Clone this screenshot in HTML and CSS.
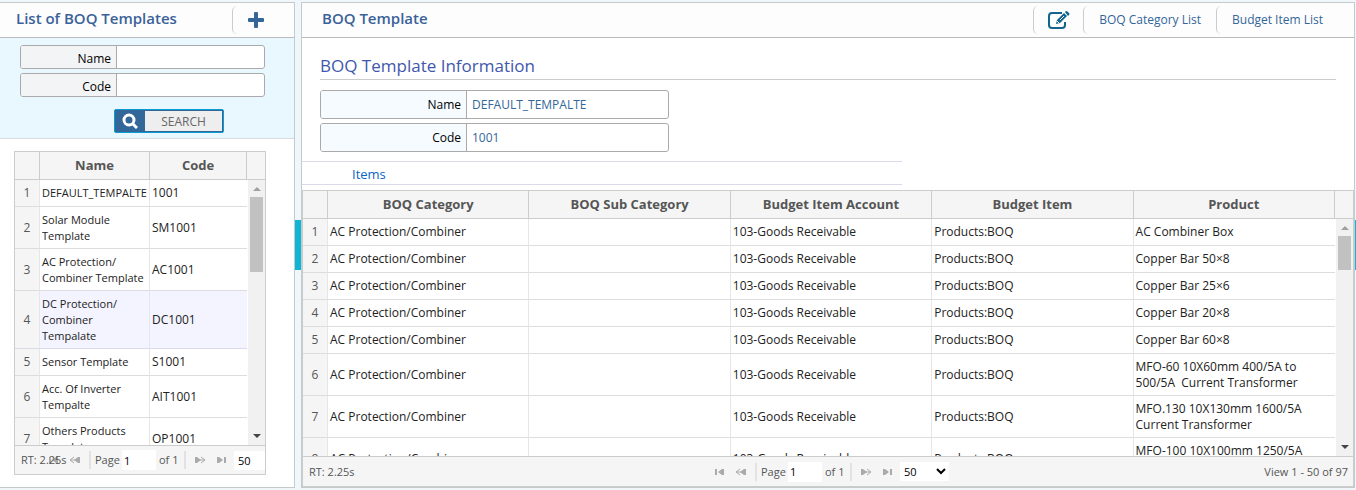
FILE: index.html
```html
<!DOCTYPE html>
<html lang="en">
<head>
    <meta charset="UTF-8">
    <meta name="viewport" content="width=device-width, initial-scale=1.0">
    <title>BOQ Template</title>
    <link rel="stylesheet" href="styles.css">
</head>
<body>
    <svg class="symbols" aria-hidden="true">
        <symbol id="icon-first" viewBox="0 0 11 8"><path d="M1 1h2v6H1zM10 1v6H8L4 4l4-3z"/></symbol>
        <symbol id="icon-prev" viewBox="0 0 11 8"><path d="M11 1v6H9L5 4l4-3z"/><path class="stroke" d="M5 1L1 4l4 3M1 4h5"/></symbol>
        <symbol id="icon-next" viewBox="0 0 11 8"><path d="M0 1v6h2l4-3-4-3z"/><path class="stroke" d="M6 1l4 3-4 3M10 4H5"/></symbol>
        <symbol id="icon-last" viewBox="0 0 11 8"><path d="M8 1h2v6H8zM1 1v6h2l4-3-4-3z"/></symbol>
    </svg>

    <div class="layout">
        <aside class="panel sidebar">
            <header class="panel-header">
                <h2>List of BOQ Templates</h2>
                <button type="button" class="tool add-btn" aria-label="Add">
                    <svg width="16" height="16" viewBox="0 0 16 16"><path d="M6 1q0-1 1-1h2q1 0 1 1v5h5q1 0 1 1v2q0 1-1 1h-5v5q0 1-1 1H7q-1 0-1-1v-5H1q-1 0-1-1V7q0-1 1-1h5z"/></svg>
                </button>
            </header>
            <form class="filter">
                <div class="field">
                    <label for="searchName">Name</label>
                    <input type="text" id="searchName" name="searchName">
                </div>
                <div class="field">
                    <label for="searchCode">Code</label>
                    <input type="text" id="searchCode" name="searchCode">
                </div>
                <button type="button" class="search-btn">
                    <span class="search-icon">
                        <svg width="16" height="16" viewBox="0 0 16 16"><circle cx="7" cy="7" r="5"/><path d="M11 11l4 4"/></svg>
                    </span>
                    <span class="search-text">SEARCH</span>
                </button>
            </form>
            <div class="grid list-grid">
                <div class="grid-body">
                    <div class="table-wrap">
                        <table>
                            <thead>
                                <tr><th class="rn"></th><th class="col-name">Name</th><th>Code</th></tr>
                            </thead>
                            <tbody>
                                <tr><td class="rn">1</td><td class="name">DEFAULT_TEMPALTE</td><td>1001</td></tr>
                                <tr class="multi"><td class="rn">2</td><td class="name">Solar Module<br>Template</td><td>SM1001</td></tr>
                                <tr class="multi"><td class="rn">3</td><td class="name">AC Protection/<br>Combiner Template</td><td>AC1001</td></tr>
                                <tr class="multi hover"><td class="rn">4</td><td class="name">DC Protection/<br>Combiner<br>Tempalate</td><td>DC1001</td></tr>
                                <tr><td class="rn">5</td><td class="name">Sensor Template</td><td>S1001</td></tr>
                                <tr class="multi"><td class="rn">6</td><td class="name">Acc. Of Inverter<br>Tempalte</td><td>AIT1001</td></tr>
                                <tr class="multi"><td class="rn">7</td><td class="name">Others Products<br>Template</td><td>OP1001</td></tr>
                            </tbody>
                        </table>
                    </div>
                    <div class="scroll">
                        <div class="scroll-head"></div>
                        <div class="track">
                            <span class="arrow up"></span>
                            <span class="thumb"></span>
                            <span class="arrow down"></span>
                        </div>
                    </div>
                </div>
                <div class="pager">
                    <span class="run-time">RT: 2.25s</span>
                    <div class="pager-nav">
                        <button type="button" aria-label="First page"><svg><use href="#icon-first"/></svg></button>
                        <button type="button" aria-label="Previous page"><svg><use href="#icon-prev"/></svg></button>
                        <span class="sep"></span>
                        <label for="listPage">Page</label>
                        <input type="text" id="listPage" value="1">
                        <span class="total">of 1</span>
                        <span class="sep"></span>
                        <button type="button" aria-label="Next page"><svg><use href="#icon-next"/></svg></button>
                        <button type="button" aria-label="Last page"><svg><use href="#icon-last"/></svg></button>
                        <select aria-label="Rows per page"><option>50</option></select>
                    </div>
                </div>
            </div>
        </aside>

        <div class="splitter"><span></span></div>

        <main class="panel content">
            <header class="panel-header">
                <h2>BOQ Template</h2>
                <button type="button" class="tool edit-btn" aria-label="Edit">
                    <svg width="22" height="18" viewBox="0 0 22 18">
                        <path class="sheet" d="M14 2H4q-3 0-3 3v9q0 3 3 3h10q3 0 3-3v-3"/>
                        <path d="M8 13l1-4 7-7 3 3-7 7z"/>
                        <path d="M17 1l1-1q1 0 2 1l1 1q1 1 0 2l-1 1z"/>
                        <path class="tip" d="M9 10l2 2M12 9l4-4"/>
                    </svg>
                </button>
                <a class="tool" href="#category">BOQ Category List</a>
                <a class="tool" href="#budget">Budget Item List</a>
            </header>
            <section class="info">
                <h3>BOQ Template Information</h3>
                <div class="field">
                    <label for="name">Name</label>
                    <input type="text" id="name" value="DEFAULT_TEMPALTE" readonly>
                </div>
                <div class="field">
                    <label for="code">Code</label>
                    <input type="text" id="code" value="1001" readonly>
                </div>
            </section>
            <div class="tabs"><a href="#items">Items</a></div>
            <div class="grid items-grid">
                <div class="grid-body">
                    <div class="table-wrap">
                        <table>
                            <thead>
                                <tr><th class="rn"></th><th>BOQ Category</th><th>BOQ Sub Category</th><th>Budget Item Account</th><th>Budget Item</th><th>Product</th></tr>
                            </thead>
                            <tbody>
                                <tr><td class="rn">1</td><td>AC Protection/Combiner</td><td></td><td>103-Goods Receivable</td><td>Products:BOQ</td><td>AC Combiner Box</td></tr>
                                <tr><td class="rn">2</td><td>AC Protection/Combiner</td><td></td><td>103-Goods Receivable</td><td>Products:BOQ</td><td>Copper Bar 50×8</td></tr>
                                <tr><td class="rn">3</td><td>AC Protection/Combiner</td><td></td><td>103-Goods Receivable</td><td>Products:BOQ</td><td>Copper Bar 25×6</td></tr>
                                <tr><td class="rn">4</td><td>AC Protection/Combiner</td><td></td><td>103-Goods Receivable</td><td>Products:BOQ</td><td>Copper Bar 20×8</td></tr>
                                <tr><td class="rn">5</td><td>AC Protection/Combiner</td><td></td><td>103-Goods Receivable</td><td>Products:BOQ</td><td>Copper Bar 60×8</td></tr>
                                <tr class="multi"><td class="rn">6</td><td>AC Protection/Combiner</td><td></td><td>103-Goods Receivable</td><td>Products:BOQ</td><td>MFO-60 10X60mm 400/5A to<br>500/5A&nbsp; Current Transformer</td></tr>
                                <tr class="multi"><td class="rn">7</td><td>AC Protection/Combiner</td><td></td><td>103-Goods Receivable</td><td>Products:BOQ</td><td>MFO.130 10X130mm 1600/5A<br>Current Transformer</td></tr>
                                <tr class="multi"><td class="rn">8</td><td>AC Protection/Combiner</td><td></td><td>103-Goods Receivable</td><td>Products:BOQ</td><td>MFO-100 10X100mm 1250/5A<br>Current Transformer</td></tr>
                            </tbody>
                        </table>
                    </div>
                    <div class="scroll">
                        <div class="scroll-head"></div>
                        <div class="track">
                            <span class="arrow up"></span>
                            <span class="thumb"></span>
                            <span class="arrow down"></span>
                        </div>
                    </div>
                </div>
                <div class="pager">
                    <span class="run-time">RT: 2.25s</span>
                    <div class="pager-nav">
                        <button type="button" aria-label="First page"><svg><use href="#icon-first"/></svg></button>
                        <button type="button" aria-label="Previous page"><svg><use href="#icon-prev"/></svg></button>
                        <span class="sep"></span>
                        <label for="itemsPage">Page</label>
                        <input type="text" id="itemsPage" value="1">
                        <span class="total">of 1</span>
                        <span class="sep"></span>
                        <button type="button" aria-label="Next page"><svg><use href="#icon-next"/></svg></button>
                        <button type="button" aria-label="Last page"><svg><use href="#icon-last"/></svg></button>
                        <select aria-label="Rows per page"><option>50</option></select>
                    </div>
                    <span class="view-info">View 1 - 50 of 97</span>
                </div>
            </div>
        </main>

        <div class="splitter edge"><span></span></div>
    </div>
</body>
</html>
```

FILE: styles.css
```css
* {
    box-sizing: border-box;
}
body {
    margin: 0;
    font-family: 'Open Sans', 'Noto Sans', sans-serif;
    font-size: 12px;
    line-height: 16px;
    color: #222;
    background-color: #f0f7fa;
}
button, input, select {
    font-family: inherit;
    font-size: inherit;
}
a {
    text-decoration: none;
}
.symbols {
    display: none;
}
.layout {
    display: flex;
    min-height: 100vh;
    overflow: hidden;
}
.panel {
    margin: 2px 0;
    background-color: #fff;
    border: 1px solid #c5cacd;
    min-width: 0;
}
.sidebar {
    flex: 0 0 295px;
    border-left: none;
}
.content {
    flex: 1;
}
.splitter {
    flex: 0 0 6px;
    display: flex;
    align-items: center;
}
.splitter span {
    width: 100%;
    height: 50px;
    background-color: #10b5d6;
}
.splitter.edge {
    flex-basis: 1px;
}
.panel-header {
    display: flex;
    align-items: center;
    height: 35px;
    background-color: #fdfdfd;
    border-bottom: 1px solid #bbb;
}
.panel-header h2 {
    flex: 1;
    margin: 0;
    padding: 0 0 4px 16px;
    font-size: 15px;
    line-height: 20px;
    font-weight: 600;
    color: #3a6299;
}
.content .panel-header {
    padding-right: 16px;
}
.content .panel-header h2 {
    padding-left: 20px;
}
.tool {
    height: 28px;
    padding: 0 15px;
    line-height: 28px;
    color: #336699;
    background: none;
    border: none;
    border-left: 1px solid #ccc;
    border-radius: 5px;
    white-space: nowrap;
}
.tool svg {
    display: block;
}
.add-btn {
    width: 62px;
}
.add-btn svg {
    fill: #336699;
}
.edit-btn {
    width: 50px;
    padding: 0 14px;
}
.edit-btn svg {
    fill: #11648f;
}
.edit-btn .sheet {
    fill: none;
    stroke: #11648f;
    stroke-width: 2;
}
.edit-btn .tip {
    fill: none;
    stroke: #fff;
}
.field {
    display: flex;
    border: 1px solid #aaa;
    border-radius: 3px;
    overflow: hidden;
    background-color: #fff;
}
.field label {
    border-right: 1px solid #aaa;
    text-align: right;
    color: #000;
}
.field input {
    flex: 1;
    min-width: 0;
    padding: 0 5px;
    border: none;
    outline: none;
    background: none;
    color: #336699;
}
.filter {
    height: 101px;
    padding: 7px 29px 0 20px;
    background-color: #e9f7fe;
    border-bottom: 1px solid #d8dcde;
}
.filter .field {
    height: 24px;
    margin-bottom: 4px;
}
.filter label {
    flex: 0 0 96px;
    padding-right: 5px;
    line-height: 26px;
    background-color: #f3f4f6;
}
.search-btn {
    display: flex;
    width: 110px;
    height: 24px;
    margin: 12px 0 0 94px;
    padding: 0;
    border: 1px solid #0a9bd0;
    border-radius: 2px;
    background-color: #336699;
}
.search-icon {
    flex: 0 0 29px;
    padding: 3px 7px;
}
.search-icon svg {
    display: block;
    fill: none;
    stroke: #fff;
    stroke-width: 3;
}
.search-text {
    flex: 1;
    margin: 1px 1px 1px 0;
    line-height: 22px;
    background-color: #eee;
    color: #666;
}
.info {
    padding: 16px 18px 0;
}
.info h3 {
    margin: 0 0 10px;
    padding-bottom: 2px;
    border-bottom: 1px solid #ccc;
    font-size: 17px;
    line-height: 23px;
    font-weight: normal;
    color: #4157ad;
}
.info .field {
    width: 349px;
    height: 29px;
    margin-bottom: 4px;
}
.info .field label {
    flex: 0 0 146px;
    padding-right: 5px;
    line-height: 27px;
    background-color: #f5fbff;
}
.tabs {
    width: 600px;
    height: 24px;
    margin-top: 9px;
    padding-left: 50px;
    border-top: 1px solid #dadaea;
    border-bottom: 1px solid #dadaea;
}
.tabs a {
    font-size: 13px;
    line-height: 24px;
    color: #0b63c4;
}
.grid {
    border: 1px solid #ccc;
    background-color: #fff;
}
.list-grid {
    margin: 12px 28px 12px 14px;
}
.items-grid {
    margin-top: 5px;
}
.grid-body {
    display: flex;
    overflow: hidden;
}
.list-grid .grid-body {
    height: 293px;
}
.items-grid .grid-body {
    height: 265px;
}
.table-wrap {
    flex: 1;
    min-width: 0;
}
.grid table {
    width: 100%;
    table-layout: fixed;
    border-collapse: separate;
    border-spacing: 0;
}
.grid th {
    height: 28px;
    padding: 0 0 2px;
    font-size: 13px;
    font-weight: bold;
    color: #555;
    background-color: #f5f5f5;
    border-right: 1px solid #ccc;
    border-bottom: 1px solid #ccc;
}
.grid td {
    padding: 5px 2px;
    border-right: 1px solid #e6e6e6;
    border-bottom: 1px solid #ddd;
}
.grid td:last-child {
    border-right: none;
}
.grid .multi td {
    padding-bottom: 4px;
}
.grid .rn {
    width: 25px;
    padding-right: 0;
    padding-left: 0;
    text-align: center;
}
.grid td.rn {
    color: #555;
    background-color: #f5f5f5;
}
.grid .col-name {
    width: 110px;
}
.grid .name {
    font-size: 11px;
    white-space: nowrap;
}
.grid .hover td {
    background-color: #f3f4ff;
    border-bottom-color: #dadaea;
}
.grid .hover td.rn {
    background-color: #f5f5f5;
}
.scroll {
    flex: 0 0 18px;
    display: flex;
    flex-direction: column;
}
.scroll-head {
    flex: 0 0 28px;
    background-color: #f5f5f5;
    border-bottom: 1px solid #ccc;
}
.track {
    flex: 1;
    display: flex;
    flex-direction: column;
    align-items: center;
    margin-left: 1px;
    padding: 7px 0;
    background-color: #f1f1f1;
}
.arrow {
    border: 4px solid transparent;
    border-top-width: 0;
    border-bottom: 4px solid #a0a0a0;
}
.arrow.down {
    margin-top: auto;
    border-top: 4px solid #444;
    border-bottom-width: 0;
}
.thumb {
    width: 13px;
    height: 75px;
    margin-top: 6px;
    background-color: #c1c1c1;
}
.items-grid .thumb {
    height: 34px;
}
.pager {
    position: relative;
    display: flex;
    justify-content: center;
    align-items: center;
    height: 29px;
    overflow: hidden;
    font-size: 11px;
    color: #555;
    background-color: #f5f5f5;
    border-top: 1px solid #ccc;
}
.list-grid .pager {
    justify-content: flex-start;
    padding-left: 28px;
}
.items-grid .pager {
    height: 30px;
}
.run-time {
    position: absolute;
    left: 6px;
}
.view-info {
    position: absolute;
    right: 5px;
}
.pager-nav {
    flex: none;
    display: flex;
    align-items: center;
    width: 238px;
}
.pager button {
    flex: 0 0 21px;
    height: 20px;
    padding: 0 5px;
    border: none;
    background: none;
}
.pager svg {
    display: block;
    width: 11px;
    height: 8px;
    fill: #aaa;
}
.stroke {
    fill: none;
    stroke: #aaa;
}
.sep {
    flex: 0 0 2px;
    height: 18px;
    margin: 0 4px;
    background-color: #e2e2e2;
}
.pager label {
    flex: 0 0 27px;
}
.pager input {
    flex: 0 0 34px;
    width: 34px;
    height: 20px;
    padding: 0 2px;
    border: none;
    color: #000;
}
.total {
    flex: 0 0 21px;
    margin-left: 3px;
}
.pager select {
    flex: 0 0 49px;
    height: 19px;
    margin-left: 2px;
    padding: 0;
    border: none;
    color: #000;
    background-color: #fff;
}
```
